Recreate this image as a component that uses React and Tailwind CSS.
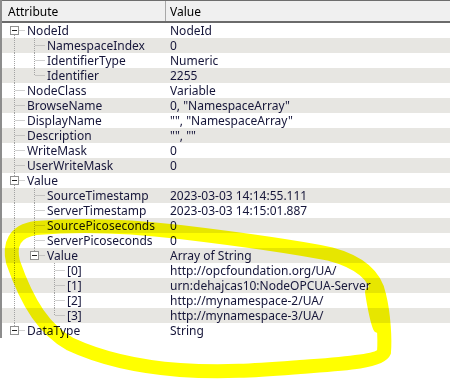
import React from 'react';

const rows = [
  { name: 'NodeId', value: 'NodeId', depth: 1, box: true, lines: [] },
  { name: 'NamespaceIndex', value: '0', depth: 2, lines: [1] },
  { name: 'IdentifierType', value: 'Numeric', depth: 2, lines: [1] },
  { name: 'Identifier', value: '2255', depth: 2, last: true, lines: [1] },
  { name: 'NodeClass', value: 'Variable', depth: 1, lines: [] },
  { name: 'BrowseName', value: '0, "NamespaceArray"', depth: 1, lines: [] },
  { name: 'DisplayName', value: '"", "NamespaceArray"', depth: 1, lines: [] },
  { name: 'Description', value: '"", ""', depth: 1, lines: [] },
  { name: 'WriteMask', value: '0', depth: 1, lines: [] },
  { name: 'UserWriteMask', value: '0', depth: 1, lines: [] },
  { name: 'Value', value: '', depth: 1, box: true, lines: [] },
  { name: 'SourceTimestamp', value: '2023-03-03 14:14:55.111', depth: 2, lines: [1] },
  { name: 'ServerTimestamp', value: '2023-03-03 14:15:01.887', depth: 2, lines: [1] },
  { name: 'SourcePicoseconds', value: '0', depth: 2, lines: [1] },
  { name: 'ServerPicoseconds', value: '0', depth: 2, lines: [1] },
  { name: 'Value', value: 'Array of String', depth: 2, box: true, last: true, lines: [1] },
  { name: '[0]', value: 'http://opcfoundation.org/UA/', depth: 3, lines: [1] },
  { name: '[1]', value: 'urn:dehajcas10:NodeOPCUA-Server', depth: 3, lines: [1] },
  { name: '[2]', value: 'http://mynamespace-2/UA/', depth: 3, lines: [1] },
  { name: '[3]', value: 'http://mynamespace-3/UA/', depth: 3, last: true, lines: [1] },
  { name: 'DataType', value: 'String', depth: 1, box: true, last: true, first: false, lines: [] },
];

const dot = { stroke: '#a3a3a3', strokeWidth: 1, strokeDasharray: '1 1' };

function Gutter({ row, index }) {
  const w = row.depth * 20 + 7 - 2;
  const cx = (d) => d * 20 - 6 + 0.5;
  const x = cx(row.depth);
  const parts = [];
  // ancestor verticals
  row.lines.forEach((d) => parts.push(<line key={'a' + d} x1={cx(d)} y1={0} x2={cx(d)} y2={15} {...dot} />));
  // own vertical
  const top = index === 0 ? 11 : 0;
  const bottom = row.last ? (row.box ? 3 : 7.5) : 15;
  if (row.box) {
    if (index !== 0) parts.push(<line key="vt" x1={x} y1={0} x2={x} y2={3} {...dot} />);
    if (!row.last) parts.push(<line key="vb" x1={x} y1={12} x2={x} y2={15} {...dot} />);
  } else {
    parts.push(<line key="v" x1={x} y1={top} x2={x} y2={bottom} {...dot} />);
  }
  // horizontal
  parts.push(<line key="h" x1={row.box ? x + 5 : x + 1} y1={7.5} x2={row.depth * 20 + 5} y2={7.5} {...dot} />);
  if (row.box) {
    parts.push(<rect key="b" x={x - 4} y={3.5} width={8} height={8} fill="#fff" stroke="#919191" />);
    parts.push(<rect key="m" x={x - 2.5} y={7} width={5} height={1} fill="#222" />);
  }
  return (
    <svg width={w} height={15} className="shrink-0">
      <g transform="translate(-2,0)">{parts}</g>
    </svg>
  );
}

export default function App() {
  return (
    <div className="relative h-[383px] w-[450px] overflow-hidden bg-white text-[12px] leading-[15px] text-[#16163a]" style={{ fontFamily: '"Noto Sans", "Open Sans", sans-serif' }}>
      <div className="border-l-2 border-[#8c8c8c]">
        <div className="flex h-[23px] border-t border-b-2 border-t-[#6e6e6e] border-b-[#6b6b6b] bg-[#f0f0f0] text-black">
          <div className="flex w-[164px] items-center border-r border-[#a8a8a8] pl-[6px]">Attribute</div>
          <div className="flex items-center pl-[4px]">Value</div>
        </div>
        {rows.map((row, i) => (
          <div key={i} className={`flex h-[15px] items-center ${i % 2 === 1 ? 'bg-[#e7e6e2]' : 'bg-white'}`}>
            <div className="flex w-[168px] shrink-0 items-center overflow-hidden">
              <Gutter row={row} index={i} />
              <span className="whitespace-nowrap">{row.name}</span>
            </div>
            <span className="whitespace-nowrap">{row.value}</span>
          </div>
        ))}
      </div>
      <svg className="pointer-events-none absolute left-0 top-0 mix-blend-multiply" width="450" height="383">
        <path
          d="M 13 262 C 9 245, 14 231, 36 228 C 80 224, 130 226, 180 232 C 230 238, 290 246, 330 254 C 360 262, 375 275, 379 295 C 384 315, 385 340, 384 352 C 380 362, 340 364, 300 367 C 260 370, 225 373, 180 370 C 140 367, 100 358, 70 344 C 45 330, 28 305, 13 262"
          fill="none"
          stroke="#ffff00"
          strokeWidth="14"
          strokeLinecap="round"
        />
        <path d="M 370 292 C 372 305, 374 318, 378 328" fill="none" stroke="#ffff00" strokeWidth="10" strokeLinecap="round" />
      </svg>
    </div>
  );
}
